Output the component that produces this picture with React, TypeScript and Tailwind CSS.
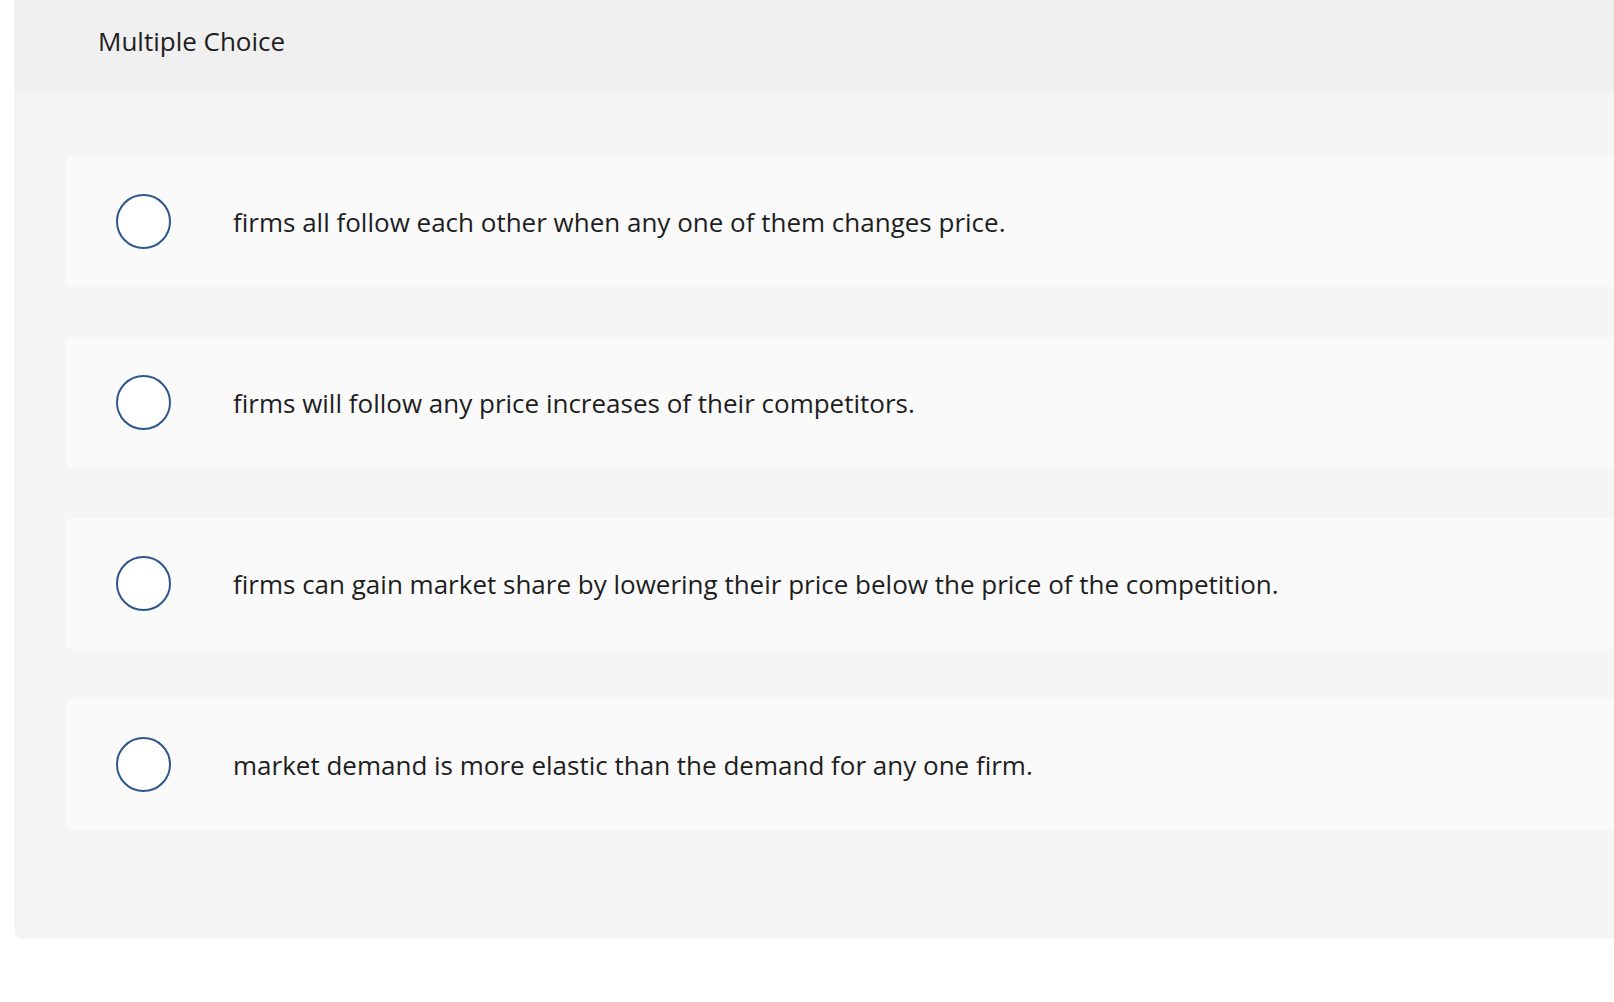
import React from 'react';

const options = [
  'firms all follow each other when any one of them changes price.',
  'firms will follow any price increases of their competitors.',
  'firms can gain market share by lowering their price below the price of the competition.',
  'market demand is more elastic than the demand for any one firm.',
];

export default function App() {
  return (
    <div className="min-h-screen bg-white pl-[14px] font-['Open_Sans',sans-serif] text-[#1e1e1e] [font-variant-ligatures:none]">
      <div className="overflow-hidden rounded-bl-lg bg-[#f5f5f5]">
        {/* Header */}
        <div className="h-[92px] bg-[#f0f0f0] pt-[26px] pl-[84px]">
          <h1 className="text-[26px] leading-[30px]">Multiple Choice</h1>
        </div>

        {/* Options */}
        <div className="flex flex-col gap-[50px] pt-[64px] pb-[109px] pl-[52px]">
          {options.map(text => (
            <label
              key={text}
              className="flex h-[131px] cursor-pointer items-center rounded-l-md bg-[#fafafa] pl-[50px]"
            >
              <span className="h-[55px] w-[55px] shrink-0 rounded-full border-2 border-[#2d578c] bg-white" />
              <span className="ml-[62px] text-[26px] leading-none">{text}</span>
            </label>
          ))}
        </div>
      </div>
    </div>
  );
}
